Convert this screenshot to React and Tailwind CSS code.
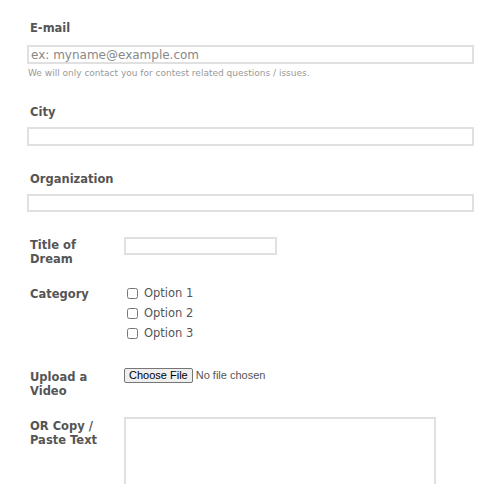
import React from "react";

const font = { fontFamily: '"DejaVu Sans", Verdana, sans-serif' };

const Label = ({ children, className = "" }) => (
  <label
    className={`block pl-[3px] text-[11.5px] font-bold leading-[14px] text-[#555] ${className}`}
  >
    {children}
  </label>
);

const App = () => {
  return (
    <div className="h-screen overflow-hidden bg-white px-[27px] pt-[21px]" style={font}>
      <Label>E-mail</Label>
      <input
        type="email"
        placeholder="ex: myname@example.com"
        className="mt-[10px] block h-[19px] w-[447px] border-2 border-[#e0e0e0] px-[2px] text-[12px] text-[#555] placeholder:text-[#888] outline-none"
      />
      <p className="mt-[3px] pl-[1px] text-[9px] leading-[12px] text-[#999]">
        We will only contact you for contest related questions / issues.
      </p>

      <Label className="mt-[26px]">City</Label>
      <input
        type="text"
        className="mt-[8px] block h-[19px] w-[447px] border-2 border-[#e0e0e0] outline-none"
      />

      <Label className="mt-[26px]">Organization</Label>
      <input
        type="text"
        className="mt-[8px] block h-[18px] w-[447px] border-2 border-[#e0e0e0] outline-none"
      />

      <div className="mt-[25px] flex">
        <Label className="mt-[1px] w-[97px]">
          Title of
          <br />
          Dream
        </Label>
        <input
          type="text"
          className="block h-[18px] w-[153px] border-2 border-[#e0e0e0] outline-none"
        />
      </div>

      <div className="mt-[20px] flex">
        <Label className="mt-[1px] w-[97px]">Category</Label>
        <div className="flex flex-col gap-[6px]">
          {["Option 1", "Option 2", "Option 3"].map((o) => (
            <label key={o} className="flex items-center text-[11.5px] leading-[14px] text-[#555]">
              <input type="checkbox" className="ml-[3px] mr-[6px] h-[11px] w-[11px]" />
              {o}
            </label>
          ))}
        </div>
      </div>

      <div className="mt-[28px] flex">
        <Label className="mt-[2px] w-[97px]">
          Upload a
          <br />
          Video
        </Label>
        <div
          className="flex h-[15px] items-center text-[11px] text-[#555]"
          style={{ fontFamily: '"Liberation Sans", Arial, sans-serif' }}
        >
          <button className="h-[15px] rounded-[2px] border border-[#767676] bg-[#efefef] px-[4px] text-[11px] leading-[13px] text-black">
            Choose File
          </button>
          <span className="ml-[3px]">No file chosen</span>
        </div>
      </div>

      <div className="mt-[19px] flex">
        <Label className="mt-[2px] w-[97px]">
          OR Copy /
          <br />
          Paste Text
        </Label>
        <textarea className="block h-[90px] w-[312px] resize-none border-2 border-[#e0e0e0] outline-none" />
      </div>
    </div>
  );
};

export default App;
